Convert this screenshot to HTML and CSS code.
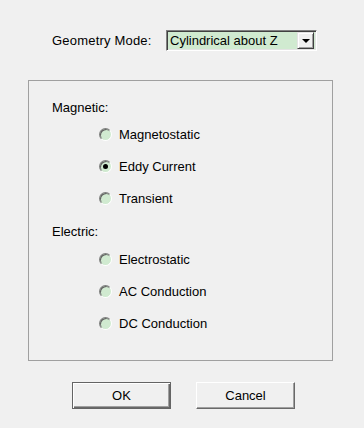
FILE: index.html
```html
<!DOCTYPE html>
<html lang="en">
<head>
<meta charset="utf-8">
<title>Solver Type</title>
<link rel="stylesheet" href="styles.css">
</head>
<body>

<div id="dialog">
	<div class="mode-row">
		<span class="mode-label">Geometry Mode:</span>
		<div class="combo">
			<span class="combo-text">Cylindrical about Z</span>
			<span class="combo-button"><span class="arrow"></span></span>
		</div>
	</div>

	<div class="frame">
		<div class="group-label">Magnetic:</div>
		<label class="option"><span class="radio"></span>Magnetostatic</label>
		<label class="option"><span class="radio checked"></span>Eddy Current</label>
		<label class="option"><span class="radio"></span>Transient</label>

		<div class="group-label electric">Electric:</div>
		<label class="option"><span class="radio"></span>Electrostatic</label>
		<label class="option"><span class="radio"></span>AC Conduction</label>
		<label class="option"><span class="radio"></span>DC Conduction</label>
	</div>

	<div class="button-row">
		<button class="btn default">OK</button>
		<button class="btn">Cancel</button>
	</div>
</div>

</body>
</html>
```

FILE: styles.css
```css
html {
	font-family: 'Liberation Sans', Arial, sans-serif;
	font-size: 13px;
}

body {
	margin: 0;
	background-color: rgb(240, 240, 240);
	color: rgb(0, 0, 0);
}

#dialog {
	width: 364px;
	height: 428px;
	padding-top: 30px;
	box-sizing: border-box;
}

.mode-row {
	display: flex;
	align-items: center;
	height: 21px;
	padding-left: 52px;
}

.mode-label {
	width: 114px;
	letter-spacing: 0.2px;
}

.combo {
	display: flex;
	align-items: center;
	width: 151px;
	height: 21px;
	box-sizing: border-box;
	border: 1px solid;
	border-color: rgb(128, 128, 128) rgb(255, 255, 255) rgb(255, 255, 255) rgb(128, 128, 128);
	box-shadow: inset 1px 1px rgb(64, 64, 64), inset -1px -1px rgb(227, 227, 227);
	background-color: rgb(208, 234, 208);
	padding: 0 2px 0 3px;
}

.combo-text {
	flex: 1;
	line-height: 16px;
}

.combo-button {
	display: flex;
	align-items: center;
	justify-content: center;
	width: 17px;
	height: 17px;
	box-sizing: border-box;
	background-color: rgb(240, 240, 240);
	border: 1px solid;
	border-color: rgb(227, 227, 227) rgb(64, 64, 64) rgb(64, 64, 64) rgb(227, 227, 227);
	box-shadow: inset 1px 1px rgb(255, 255, 255), inset -1px -1px rgb(160, 160, 160);
}

.arrow {
	width: 0;
	height: 0;
	border-left: 4px solid transparent;
	border-right: 4px solid transparent;
	border-top: 4px solid rgb(0, 0, 0);
	margin-top: 1px;
}

.frame {
	width: 305px;
	height: 281px;
	box-sizing: border-box;
	margin: 29px 0 0 28px;
	border: 1px solid rgb(160, 160, 160);
	padding: 19px 0 0 23px;
}

.group-label {
	line-height: 16px;
	margin-bottom: 2px;
}

.group-label.electric {
	margin-top: 10px;
	margin-bottom: 3px;
}

.option {
	display: flex;
	align-items: center;
	height: 32px;
	padding-left: 47px;
}

.radio {
	position: relative;
	width: 13px;
	height: 13px;
	box-sizing: border-box;
	border-radius: 50%;
	border: 1px solid;
	border-color: rgb(128, 128, 128) rgb(255, 255, 255) rgb(255, 255, 255) rgb(128, 128, 128);
	box-shadow: inset 1px 1px rgb(96, 96, 96);
	background-color: rgb(208, 234, 208);
	margin-right: 7px;
}

.radio.checked::after {
	content: "";
	position: absolute;
	left: 3px;
	top: 3px;
	width: 5px;
	height: 5px;
	border-radius: 50%;
	background-color: rgb(0, 0, 0);
}

.button-row {
	display: flex;
	gap: 25px;
	margin: 21px 0 0 72px;
}

.btn {
	width: 99px;
	height: 27px;
	box-sizing: border-box;
	font-family: inherit;
	font-size: 13px;
	color: rgb(0, 0, 0);
	background-color: rgb(240, 240, 240);
	border: 1px solid;
	border-color: rgb(255, 255, 255) rgb(105, 105, 105) rgb(105, 105, 105) rgb(255, 255, 255);
	box-shadow: inset -1px -1px rgb(160, 160, 160);
	padding: 0;
}

.btn.default {
	border-color: rgb(100, 100, 100);
	box-shadow: inset 1px 1px rgb(255, 255, 255), inset -1px -1px rgb(105, 105, 105), inset -2px -2px rgb(160, 160, 160);
}
```
